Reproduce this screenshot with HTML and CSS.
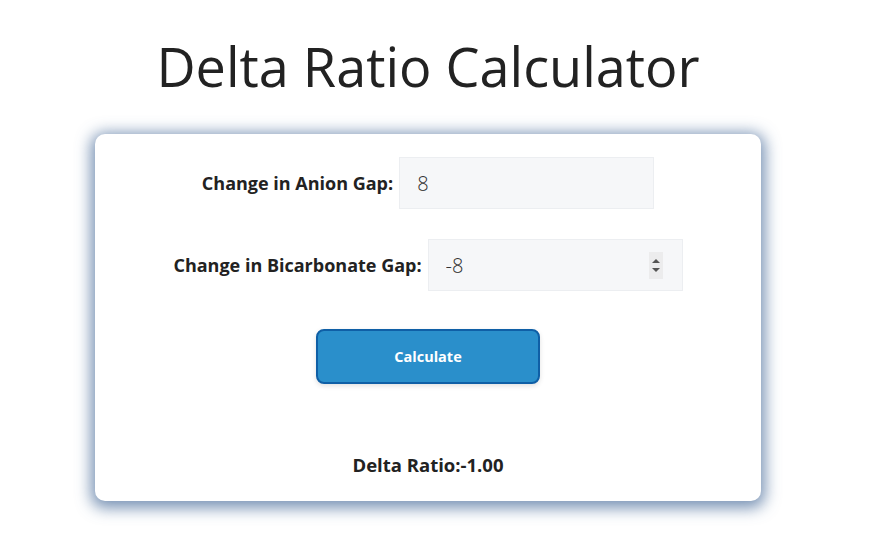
FILE: index.html
```html
<!DOCTYPE html>
<html>
<head>
<meta charset="utf-8">
<link rel="stylesheet" href="styles.css">
</head>
<body>
<div class="page">
  <h1 class="title">Delta Ratio Calculator</h1>
  <div class="card">
    <div class="row">
      <label class="label">Change in Anion Gap:</label>
      <div class="field"><input class="input" type="text" value="8"></div>
    </div>
    <div class="row">
      <label class="label">Change in Bicarbonate Gap:</label>
      <div class="field">
        <input class="input" type="text" value="-8">
        <span class="spinner"><span class="up"></span><span class="down"></span></span>
      </div>
    </div>
    <div class="actions">
      <button class="btn">Calculate</button>
    </div>
    <div class="result">Delta Ratio:-1.00</div>
  </div>
</div>
</body>
</html>
```
FILE: styles.css
```css
html, body {
  margin: 0;
  padding: 0;
  background: #ffffff;
}
body {
  font-family: "Open Sans", "Noto Sans", sans-serif;
  color: #212121;
}
.page {
  width: 856px;
  display: flex;
  flex-direction: column;
  align-items: center;
  padding-bottom: 50px;
}
.title {
  margin: 30px 0 0 0;
  font-weight: 400;
  font-size: 54px;
  line-height: 72px;
  color: #222222;
}
.card {
  margin-top: 32px;
  width: 666px;
  height: 367px;
  box-sizing: border-box;
  background: #ffffff;
  border-radius: 10px;
  box-shadow: 0 3px 15px 4px rgba(62, 100, 148, 0.7);
  display: flex;
  flex-direction: column;
  align-items: center;
  padding-top: 23px;
}
.row {
  display: flex;
  align-items: center;
  gap: 6px;
  margin-bottom: 30px;
}
.label {
  font-weight: 700;
  font-size: 18px;
  color: #222222;
}
.field {
  position: relative;
}
.input {
  display: block;
  width: 255px;
  height: 52px;
  box-sizing: border-box;
  background: #f6f7f9;
  border: 1px solid #eceef1;
  padding: 0 17px;
  font-family: "Open Sans", "Noto Sans", sans-serif;
  font-size: 20px;
  font-weight: 300;
  color: #333333;
  outline: none;
}
.spinner {
  position: absolute;
  right: 20px;
  top: 13px;
  width: 14px;
  height: 27px;
  background: #ececed;
  display: flex;
  flex-direction: column;
  align-items: center;
  justify-content: center;
  gap: 5px;
}
.up {
  width: 0;
  height: 0;
  border-left: 4px solid transparent;
  border-right: 4px solid transparent;
  border-bottom: 4px solid #555555;
}
.down {
  width: 0;
  height: 0;
  border-left: 4px solid transparent;
  border-right: 4px solid transparent;
  border-top: 4px solid #555555;
}
.actions {
  margin-top: 8px;
}
.btn {
  width: 224px;
  height: 55px;
  background: #2a8fcb;
  border: 2px solid #0f5fa6;
  border-radius: 8px;
  color: #ffffff;
  font-family: "Open Sans", "Noto Sans", sans-serif;
  font-weight: 700;
  font-size: 14.5px;
  box-shadow: 0 2px 5px rgba(0, 0, 0, 0.12);
}
.result {
  margin-top: 68px;
  font-weight: 700;
  font-size: 18.5px;
  color: #222222;
}
```
